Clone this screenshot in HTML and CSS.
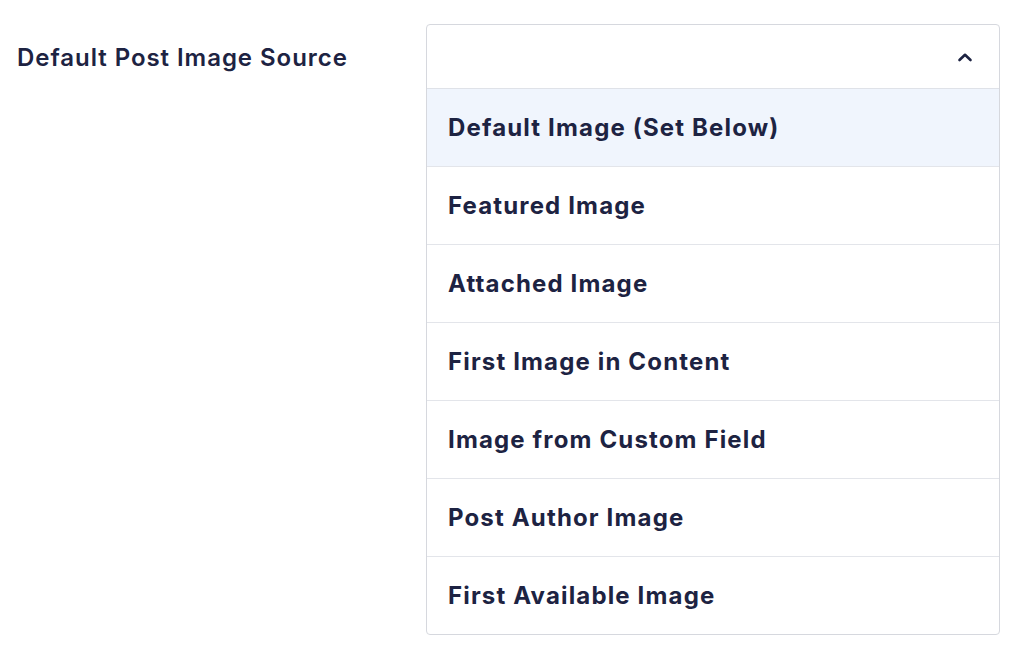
FILE: index.html
```html
<!DOCTYPE html>
<html>
<head>
<meta charset="utf-8">
<link rel="stylesheet" href="styles.css">
</head>
<body>
<div class="row">
  <div class="label">Default Post Image Source</div>
  <div class="select">
    <div class="select-head">
      <svg class="caret" width="16" height="10" viewBox="0 0 16 10"><path d="M2.5 8 L8 2.8 L13.5 8" fill="none" stroke="#1d2342" stroke-width="2.6" stroke-linecap="round" stroke-linejoin="round"/></svg>
    </div>
    <ul class="options">
      <li class="opt active">Default Image (Set Below)</li>
      <li class="opt">Featured Image</li>
      <li class="opt">Attached Image</li>
      <li class="opt">First Image in Content</li>
      <li class="opt">Image from Custom Field</li>
      <li class="opt">Post Author Image</li>
      <li class="opt">First Available Image</li>
    </ul>
  </div>
</div>
</body>
</html>
```
FILE: styles.css
```css
html, body {
  margin: 0;
  padding: 0;
  background: #ffffff;
}
body {
  font-family: Inter, "Noto Sans", sans-serif;
  color: #1d2342;
}
.row {
  display: flex;
  align-items: flex-start;
  padding: 24px 0 0 17px;
}
.label {
  width: 409px;
  font-size: 24px;
  font-weight: 600;
  line-height: 29px;
  margin-top: 19px;
  letter-spacing: 0.95px;
}
.select {
  width: 572px;
  border: 1px solid #d6d8de;
  border-radius: 4px;
  background: #fff;
  overflow: hidden;
}
.select-head {
  height: 63px;
  display: flex;
  align-items: center;
  justify-content: flex-end;
  padding-right: 26px;
  border-bottom: 1px solid #dfe2e8;
}
.caret {
  display: block;
}
.options {
  list-style: none;
  margin: 0;
  padding: 0;
}
.opt {
  height: 77px;
  display: flex;
  align-items: center;
  padding-left: 21px;
  font-size: 24px;
  font-weight: 700;
  border-bottom: 1px solid #e3e5ea;
  letter-spacing: 1.15px;
}
.opt:last-child {
  border-bottom: none;
}
.opt.active {
  background: #f0f5fd;
}
```
